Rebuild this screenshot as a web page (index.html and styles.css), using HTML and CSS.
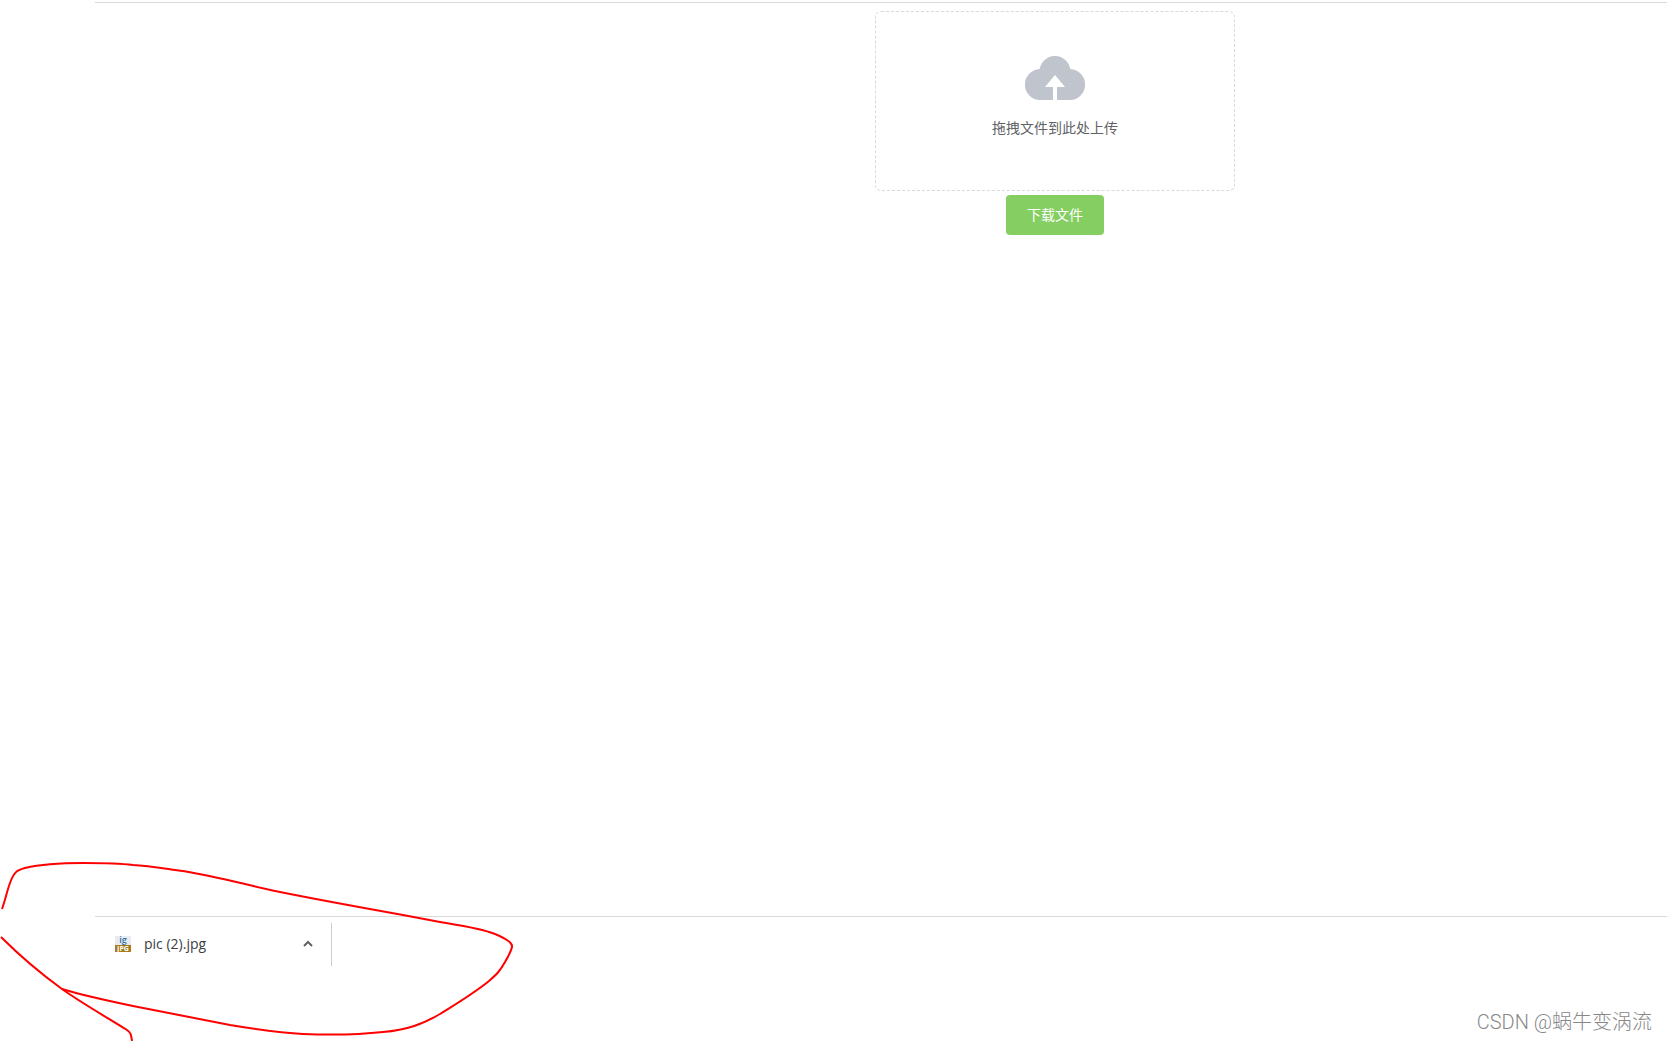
FILE: index.html
```html
<!DOCTYPE html>
<html lang="zh-CN">
<head>
  <meta charset="UTF-8">
  <meta name="viewport" content="width=device-width, initial-scale=1.0">
  <title>文件上传下载</title>
  <link rel="stylesheet" href="styles.css">
</head>
<body>

  <!-- Upload / download page -->
  <main class="content">
    <button type="button" class="upload-dragger">
      <svg class="upload-icon" viewBox="0 0 60 44" aria-hidden="true">
        <path d="M14.700 13A15.500 15.500 0 0 1 45.300 13A15.500 15.500 0 0 1 44 44H32V31H40L30 19L20 31H28V44H16A15.500 15.500 0 0 1 14.700 13Z"/>
      </svg>
      <span class="upload-text">拖拽文件到此处上传</span>
    </button>
    <button type="button" class="download-button">下载文件</button>
  </main>

  <!-- Browser download bar -->
  <footer class="download-bar">
    <div class="download-item">
      <svg class="file-icon" viewBox="0 0 16 16" aria-hidden="true">
        <rect class="file-paper" width="16" height="9"/>
        <text class="file-letters" x="8" y="7">ig</text>
        <rect class="file-band" y="9" width="16" height="7"/>
        <text class="file-type" x="8" y="15">JPG</text>
      </svg>
      <a class="file-name" href="#">pic (2).jpg</a>
      <button type="button" class="menu-button" aria-label="更多">
        <svg viewBox="0 0 10 7" aria-hidden="true">
          <path d="M1 6L5 2L9 6"/>
        </svg>
      </button>
    </div>
  </footer>

  <!-- Red pen mark around the downloaded file -->
  <svg class="pen-mark" viewBox="0 0 520 185" aria-hidden="true">
    <path d="M2 53C5 45 7 35 10 27C14 16 17 14 25 12C42 8 60 7 83 7C100 7 117 7 133 9C150 10 167 13 183 15C220 21 250 30 285 37C325 45 364 52 403 59L440 66C458 69 480 72 495 78C507 83 513 87 512 91C511 95 508 101 505 106C500 115 497 118 489 125C473 138 456 148 440 158C423 168 407 174 383 176C356 179 330 179 303 178C279 177 254 173 230 169C198 163 165 156 133 150C109 145 85 140 62 133"/>
    <path d="M1 81C20 100 40 117 62 133C83 148 105 160 127 174C131 177 131 178 132 185"/>
  </svg>

  <div class="watermark">CSDN @蜗牛变涡流</div>

</body>
</html>
```
FILE: styles.css
```css
* {
  box-sizing: border-box;
}

body {
  margin: 0;
  padding: 2px 0 0 95px;
  min-height: 100vh;
  display: flex;
  flex-direction: column;
  background-color: #fff;
  font-family: "Liberation Sans", "Noto Sans CJK SC", sans-serif;
  font-size: 14px;
}

button {
  font-family: inherit;
  font-size: 14px;
  cursor: pointer;
}

/* Upload area */
.content {
  flex: 1;
  display: flex;
  flex-direction: column;
  align-items: center;
  gap: 4px;
  padding: 8px 0 0 348px;
  border-top: 1px solid #dadada;
}

.upload-dragger {
  width: 360px;
  height: 180px;
  padding: 44px 0 0;
  display: flex;
  flex-direction: column;
  align-items: center;
  gap: 18px;
  background-color: #fff;
  border: 1px dashed #d9d9d9;
  border-radius: 6px;
}

.upload-dragger:hover {
  border-color: #409eff;
}

.upload-icon {
  width: 60px;
  height: 44px;
  fill: #c0c4cc;
}

.upload-text {
  color: #606266;
  line-height: 20px;
}

.download-button {
  height: 40px;
  padding: 0 21px 2px;
  background-color: #85ce61;
  color: #fff;
  border: none;
  border-radius: 4px;
}

/* Download bar */
.download-bar {
  display: flex;
  padding: 6px 0 75px;
  border-top: 1px solid #dadada;
}

.download-item {
  width: 237px;
  height: 43px;
  padding: 0 13px 2px 20px;
  display: flex;
  align-items: center;
  border-right: 1px solid #ccc;
}

.file-icon {
  width: 16px;
  height: 16px;
  overflow: visible;
  font-family: "Open Sans", sans-serif;
  text-anchor: middle;
}

.file-paper {
  fill: #e8ebef;
}

.file-letters {
  fill: #2d6ca8;
  font-size: 9px;
  font-weight: 600;
}

.file-band {
  fill: #a67c1e;
}

.file-type {
  fill: #fff;
  font-size: 7px;
  font-weight: bold;
}

.file-name {
  flex: 1;
  margin-left: 13px;
  color: #3c4043;
  font-family: "Open Sans", sans-serif;
  font-size: 14px;
  text-decoration: none;
}

.menu-button {
  width: 20px;
  height: 20px;
  padding: 0;
  display: flex;
  align-items: center;
  justify-content: center;
  background: none;
  border: none;
}

.menu-button svg {
  width: 10px;
  height: 7px;
  fill: none;
  stroke: #5f6368;
  stroke-width: 2;
}

/* Things drawn over the page */
.pen-mark {
  position: absolute;
  left: 0;
  bottom: 0;
  width: 520px;
  height: 185px;
  fill: none;
  stroke: #f00;
  stroke-width: 2;
  pointer-events: none;
}

.watermark {
  position: absolute;
  right: 15px;
  bottom: 4px;
  color: #888;
  font-family: Roboto, "Noto Sans CJK SC", sans-serif;
  font-size: 20px;
  font-weight: 300;
  line-height: 30px;
}
```
